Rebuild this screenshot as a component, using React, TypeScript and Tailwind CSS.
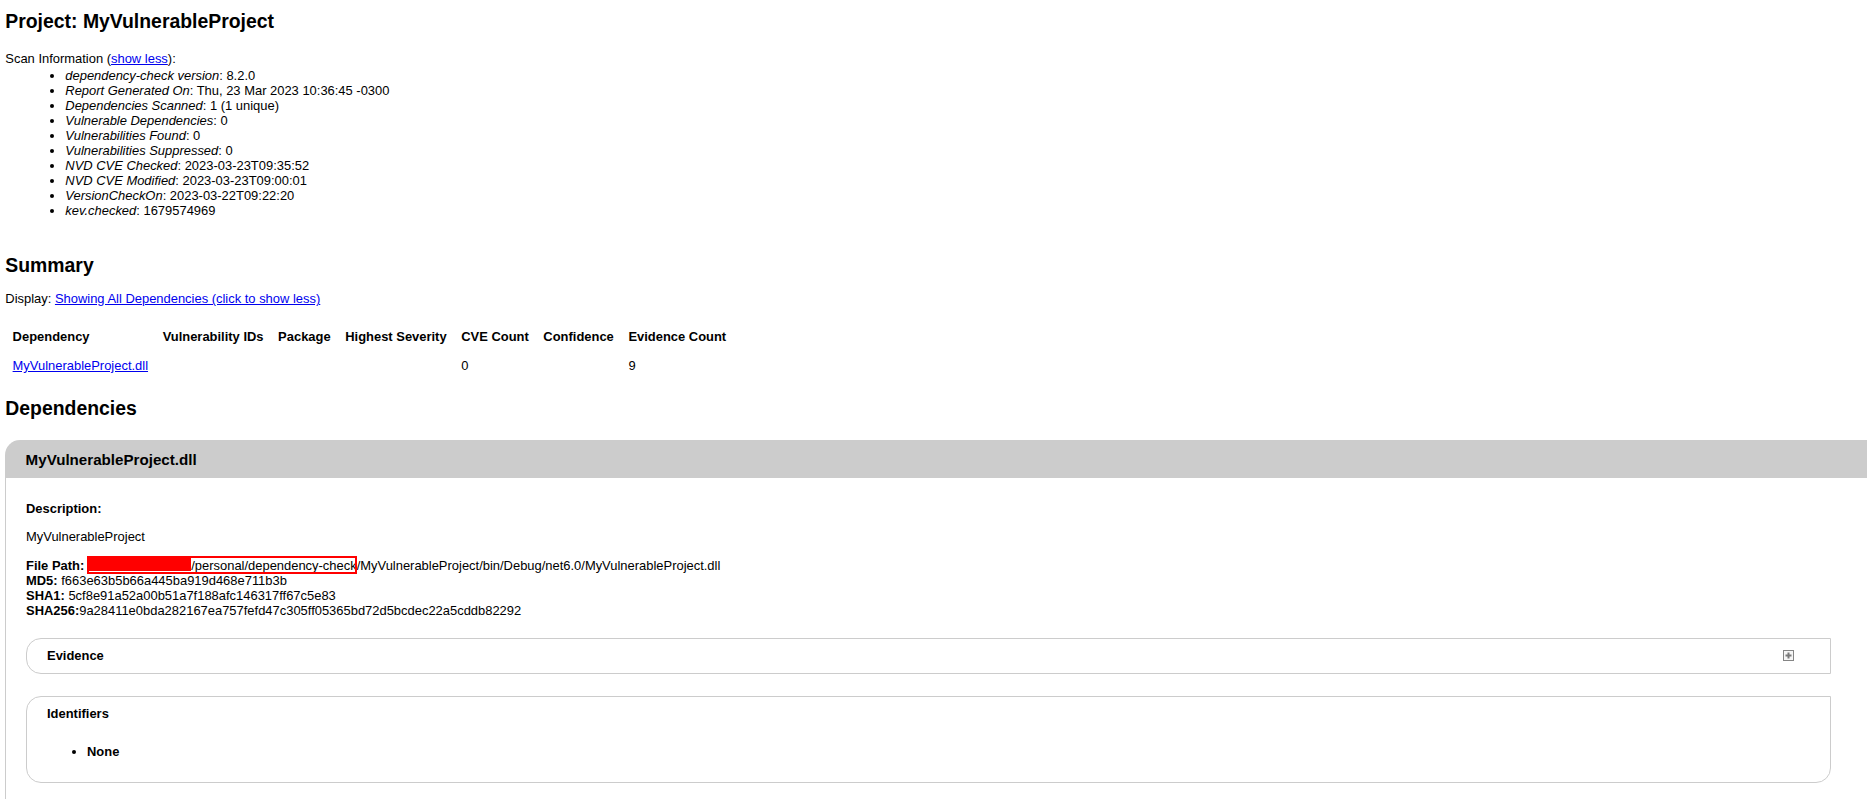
import React from "react";

const scanInfo: [string, string][] = [
  ["dependency-check version", "8.2.0"],
  ["Report Generated On", "Thu, 23 Mar 2023 10:36:45 -0300"],
  ["Dependencies Scanned", "1 (1 unique)"],
  ["Vulnerable Dependencies", "0"],
  ["Vulnerabilities Found", "0"],
  ["Vulnerabilities Suppressed", "0"],
  ["NVD CVE Checked", "2023-03-23T09:35:52"],
  ["NVD CVE Modified", "2023-03-23T09:00:01"],
  ["VersionCheckOn", "2023-03-22T09:22:20"],
  ["kev.checked", "1679574969"],
];

const headers = [
  "Dependency",
  "Vulnerability IDs",
  "Package",
  "Highest Severity",
  "CVE Count",
  "Confidence",
  "Evidence Count",
];

function PlusBox() {
  return (
    <svg width="11" height="11" viewBox="0 0 11 11" className="block">
      <rect x="0.5" y="0.5" width="10" height="10" fill="#f6f6f6" stroke="#858585" />
      <rect x="2.5" y="4.5" width="6" height="2" fill="#7a7a7a" />
      <rect x="4.5" y="2.5" width="2" height="6" fill="#7a7a7a" />
    </svg>
  );
}

export default function App() {
  return (
    <div className="h-[799px] w-full overflow-hidden bg-white text-black font-['Liberation_Sans',Arial,sans-serif] text-[12.95px] leading-[normal] pl-[5.3px] pt-[9.5px]">
      <h2 className="text-[19.4px] font-bold leading-[normal]">Project: MyVulnerableProject</h2>

      <div className="mt-[18.5px]">
        Scan Information (
        <a href="#" className="text-[#0000ee] underline">
          show less
        </a>
        ):
      </div>
      <ul className="mt-[2px] ml-[20px] pl-[40px] list-disc">
        {scanInfo.map(([k, v]) => (
          <li key={k}>
            <i>{k}</i>: {v}
          </li>
        ))}
      </ul>

      <h2 className="mt-[35.5px] text-[19.4px] font-bold leading-[normal]">Summary</h2>
      <div className="mt-[14.5px]">
        Display:{" "}
        <a href="#" className="text-[#0000ee] underline">
          Showing All Dependencies (click to show less)
        </a>
      </div>

      <table className="mt-[16.2px] border-collapse">
        <thead>
          <tr>
            {headers.map((h) => (
              <th key={h} className="px-[7.3px] py-[7px] text-left font-bold">
                {h}
              </th>
            ))}
          </tr>
        </thead>
        <tbody>
          <tr>
            <td className="px-[7.3px] py-[7px]">
              <a href="#" className="text-[#0000ee] underline">
                MyVulnerableProject.dll
              </a>
            </td>
            <td className="px-[7.3px] py-[7px]"></td>
            <td className="px-[7.3px] py-[7px]"></td>
            <td className="px-[7.3px] py-[7px]"></td>
            <td className="px-[7.3px] py-[7px]">0</td>
            <td className="px-[7.3px] py-[7px]"></td>
            <td className="px-[7.3px] py-[7px]">9</td>
          </tr>
        </tbody>
      </table>

      <h2 className="mt-[16.5px] text-[19.4px] font-bold leading-[normal]">Dependencies</h2>

      <div className="mt-[20.3px] -ml-[0.3px] w-[1900px]">
        <div className="h-[38px] bg-[#cccccc] rounded-tl-[15px] pl-[20.6px] pt-[11.4px]">
          <h3 className="text-[15.15px] font-bold leading-[normal]">MyVulnerableProject.dll</h3>
        </div>
        <div className="border-l border-[#cccccc] pl-[20px] pt-[23.4px] pb-[40px]">
          <p className="font-bold">Description:</p>
          <p className="mt-[12.9px]">MyVulnerableProject</p>
          <p className="mt-[13.3px]">
            <b>File Path:</b>{" "}
            <span className="relative inline-block">
              <span className="ml-[1.4px] inline-block align-top w-[102px] h-[13px] bg-[#ff0000]"></span>
              /personal/dependency-check
              <span className="absolute -top-[1.4px] -bottom-[1.1px] -left-[1px] right-0 border-2 border-[#ff0000]"></span>
            </span>
            /MyVulnerableProject/bin/Debug/net6.0/MyVulnerableProject.dll
            <br />
            <b>MD5:</b> f663e63b5b66a445ba919d468e711b3b
            <br />
            <b>SHA1:</b> 5cf8e91a52a00b51a7f188afc146317ff67c5e83
            <br />
            <b>SHA256:</b>9a28411e0bda282167ea757fefd47c305ff05365bd72d5bcdec22a5cddb82292
          </p>

          <div className="mt-[20.3px] w-[1805px] h-[36px] border border-[#cccccc] rounded-l-[15px] pl-[20px] pr-[36px] flex items-center justify-between">
            <span className="font-bold">Evidence</span>
            <PlusBox />
          </div>

          <div className="mt-[21.7px] w-[1805px] border border-[#cccccc] rounded-tl-[15px] rounded-b-[15px] pl-[20px] pt-[9.4px] pb-[22.5px]">
            <div className="font-bold">Identifiers</div>
            <ul className="mt-[23.2px] pl-[40px] list-disc">
              <li className="font-bold">None</li>
            </ul>
          </div>
        </div>
      </div>
    </div>
  );
}
